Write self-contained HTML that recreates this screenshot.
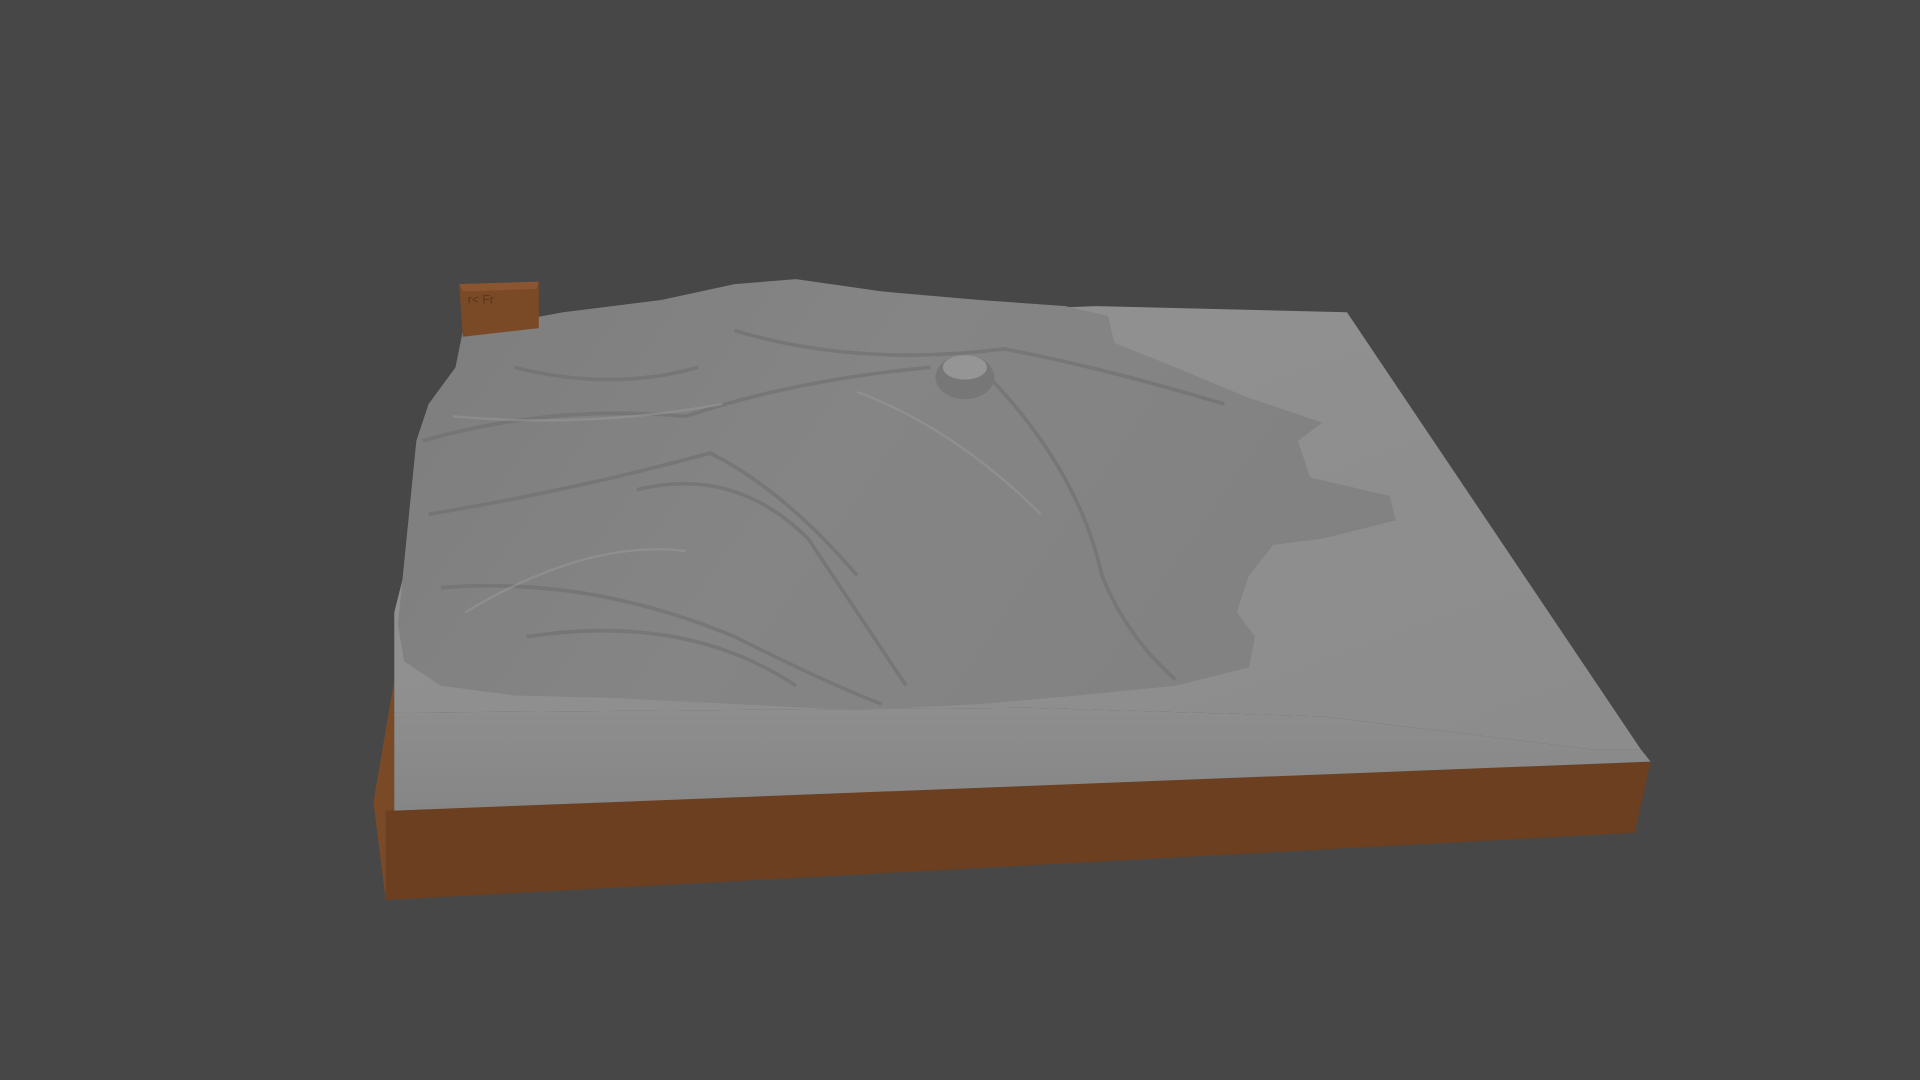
<!DOCTYPE html>
<html><head><meta charset="utf-8"><style>
html,body{margin:0;padding:0;background:#474747;width:1920px;height:1080px;overflow:hidden}
svg{display:block}
</style></head><body>
<svg width="1920" height="1080" viewBox="0 0 1568 882" preserveAspectRatio="none">
<defs>
<linearGradient id="plate" x1="0" y1="0" x2="1" y2="1">
<stop offset="0" stop-color="#929292"/><stop offset="1" stop-color="#8c8c8c"/>
</linearGradient>
<linearGradient id="front" x1="0" y1="0" x2="0" y2="1">
<stop offset="0" stop-color="#8e8e8e"/><stop offset="1" stop-color="#868686"/>
</linearGradient>
<linearGradient id="terr" x1="0" y1="0" x2="1" y2="0.3">
<stop offset="0" stop-color="#7d7d7d"/><stop offset="0.5" stop-color="#858585"/><stop offset="1" stop-color="#828282"/>
</linearGradient>
</defs>
<rect width="1568" height="882" fill="#474747"/>
<polygon points="322,555 305,655 315,735 322,662" fill="#7a4a27"/>
<polygon points="315,662 1348,622 1335,680 315,735" fill="#6b3f1f"/>
<polygon points="322,500 380,270 895,250 1100,255 1340,612 1300,612 1080,585 840,578 322,582" fill="url(#plate)"/>
<polygon points="322,582 840,578 1080,585 1300,612 1340,612 1348,622 322,662" fill="url(#front)"/>
<path d="M325,510 L340,360 L350,330 L372,300 L378,270 L460,255 L540,245 L600,232 L650,228 L720,238 L800,245 L870,250 L905,258 L910,280 L960,300 L1020,325 L1080,345 L1060,360 L1070,390 L1135,405 L1140,425 L1080,440 L1040,445 L1020,470 L1010,500 L1025,520 L1020,545 L1000,550 L960,560 L880,568 L800,575 L700,580 L600,575 L500,570 L420,568 L360,560 L330,540 Z" fill="url(#terr)"/>
<g fill="none" stroke="#6f6f6f" stroke-width="3" opacity="0.6">
<path d="M345,360 Q450,330 560,340 Q650,310 760,300"/>
<path d="M350,420 Q470,400 580,370 Q640,400 700,470"/>
<path d="M360,480 Q480,470 600,520 Q680,560 720,575"/>
<path d="M430,520 Q560,500 650,560"/>
<path d="M600,270 Q700,300 820,285 Q900,300 1000,330"/>
<path d="M520,400 Q600,380 660,440 Q700,500 740,560"/>
<path d="M800,300 Q880,380 900,470 Q920,520 960,555"/>
<path d="M420,300 Q500,320 570,300"/>
</g>
<g fill="none" stroke="#9a9a9a" stroke-width="2" opacity="0.5">
<path d="M370,340 Q480,350 590,330"/>
<path d="M700,320 Q780,350 850,420"/>
<path d="M380,500 Q480,440 560,450"/>
</g>
<ellipse cx="788" cy="308" rx="24" ry="18" fill="#777"/>
<ellipse cx="788" cy="300" rx="18" ry="10" fill="#959595"/>
<polygon points="375,232 440,230 440,268 378,275" fill="#7a4a27"/>
<polygon points="375,232 440,230 438,236 378,238" fill="#8a5530"/>
<text x="382" y="248" font-family="Liberation Sans, sans-serif" font-size="10" fill="#5a3518">r&lt; Fr</text>
</svg>
</body></html>
